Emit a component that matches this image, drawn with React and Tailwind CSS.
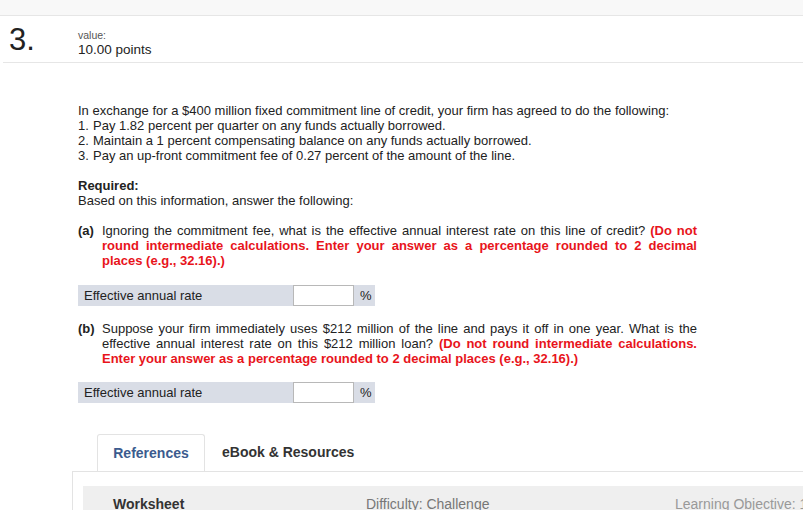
import React from 'react'

const red = 'text-[#e8141b] font-bold'

function RateRow() {
  return (
    <div className="flex h-[21px] w-[297px] items-center bg-[#d9dde6]">
      <span className="w-[215px] pl-[6px] text-[13px] text-[#222]">Effective annual rate</span>
      <input
        type="text"
        className="h-[21px] w-[61px] border border-[#b8b8b8] bg-white outline-none"
      />
      <span className="pl-[6px] text-[13px] text-[#222]">%</span>
    </div>
  )
}

export default function App() {
  return (
    <div className="h-[510px] w-[803px] overflow-hidden bg-white" style={{ fontFamily: '"Liberation Sans", Arial, sans-serif' }}>
      <div className="h-[16px] border-b border-[#e6e6e6] bg-[#f8f8f8]" />

      {/* question header */}
      <div className="ml-[3px] flex h-[47px] items-center border-b border-[#e6e6e6]">
        <div className="w-[75px] pl-[6px] text-[31px] font-light leading-none text-[#222]">3.</div>
        <div className="flex flex-col pt-[9px]">
          <span className="text-[10.5px] leading-[13px] text-[#555]">value:</span>
          <span className="text-[13.5px] leading-[16px] text-[#222]">10.00 points</span>
        </div>
      </div>

      <div className="w-[697px] pl-[78px] text-[13px] leading-[15px] text-[#222]">
        <div className="pt-[40px]">
          <p>In exchange for a $400 million fixed commitment line of credit, your firm has agreed to do the following:</p>
          <ol>
            <li className="flex"><span className="w-[15px]">1.</span>Pay 1.82 percent per quarter on any funds actually borrowed.</li>
            <li className="flex"><span className="w-[15px]">2.</span>Maintain a 1 percent compensating balance on any funds actually borrowed.</li>
            <li className="flex"><span className="w-[15px]">3.</span>Pay an up-front commitment fee of 0.27 percent of the amount of the line.</li>
          </ol>
        </div>

        <div className="pt-[15px]">
          <p className="font-bold">Required:</p>
          <p>Based on this information, answer the following:</p>
        </div>

        <div className="flex pt-[15px]">
          <span className="w-[24px] shrink-0 font-bold">(a)</span>
          <p className="text-justify">
            Ignoring the commitment fee, what is the effective annual interest rate on this line of credit?{' '}
            <span className={red}>(Do not round intermediate calculations. Enter your answer as a percentage rounded to 2 decimal places (e.g., 32.16).)</span>
          </p>
        </div>

        <div className="pt-[17px]">
          <RateRow />
        </div>

        <div className="flex pt-[15px]">
          <span className="w-[24px] shrink-0 font-bold">(b)</span>
          <p className="text-justify">
            Suppose your firm immediately uses $212 million of the line and pays it off in one year. What is the effective annual interest rate on this $212 million loan?{' '}
            <span className={red}>(Do not round intermediate calculations. Enter your answer as a percentage rounded to 2 decimal places (e.g., 32.16).)</span>
          </p>
        </div>

        <div className="pt-[16px]">
          <RateRow />
        </div>
      </div>

      {/* references tabs */}
      <div className="pl-[72px] pt-[31px]">
        <div className="flex h-[37px] items-end">
          <div className="ml-[25px] flex h-[37px] w-[108px] items-center justify-center rounded-t-[3px] border border-b-0 border-[#e3e3e3] bg-white text-[14px] font-bold text-[#3b5b8e]">
            References
          </div>
          <div className="flex h-[37px] items-center pl-[17px] text-[14px] font-bold text-[#333]">eBook &amp; Resources</div>
        </div>
        <div className="border-l border-t border-[#e3e3e3] pl-[10px] pt-[14px]">
          <div className="flex h-[40px] items-start bg-[#efefef] pt-[8px] text-[14px] whitespace-nowrap">
            <span className="w-[283px] shrink-0 pl-[30px] font-bold text-[#333]">Worksheet</span>
            <span className="w-[309px] shrink-0 text-[#777]">Difficulty: Challenge</span>
            <span className="shrink-0 text-[#999]">Learning Objective: 1</span>
          </div>
        </div>
      </div>
    </div>
  )
}
